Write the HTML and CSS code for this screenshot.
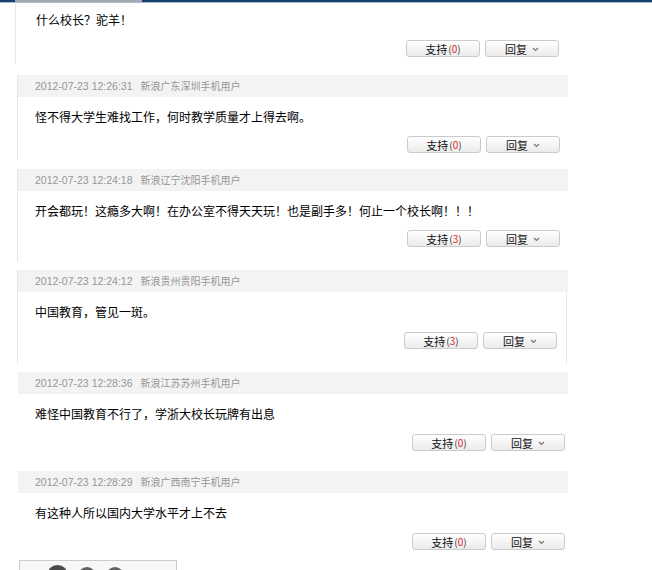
FILE: index.html
```html
<!DOCTYPE html>
<html>
<head>
  <title>评论</title>
  <meta charset="UTF-8">
  <link rel="stylesheet" href="styles.css">
</head>
<body>

<div class="top-bar">
  <div class="top-tab"></div>
</div>

<div class="comment comment-first">
  <div class="comment-body">
    <p class="comment-text">什么校长？驼羊！</p>
    <div class="actions">
      <a href="#" class="btn">支持<span class="count">(<em>0</em>)</span></a>
      <a href="#" class="btn">回复 <svg class="arrow" width="7" height="5" viewBox="0 0 7 5"><path d="M1 1 L3.5 3.5 L6 1" fill="none" stroke="#777" stroke-width="1.2"/></svg></a>
    </div>
  </div>
</div>

<div class="comment">
  <div class="comment-head">2012-07-23 12:26:31<span class="user">新浪广东深圳手机用户</span></div>
  <div class="comment-body">
    <p class="comment-text">怪不得大学生难找工作，何时教学质量才上得去啊。</p>
    <div class="actions">
      <a href="#" class="btn">支持<span class="count">(<em>0</em>)</span></a>
      <a href="#" class="btn">回复 <svg class="arrow" width="7" height="5" viewBox="0 0 7 5"><path d="M1 1 L3.5 3.5 L6 1" fill="none" stroke="#777" stroke-width="1.2"/></svg></a>
    </div>
  </div>
</div>

<div class="comment comment-tall">
  <div class="comment-head">2012-07-23 12:24:18<span class="user">新浪辽宁沈阳手机用户</span></div>
  <div class="comment-body">
    <p class="comment-text">开会都玩！这瘾多大啊！在办公室不得天天玩！也是副手多！何止一个校长啊！！！</p>
    <div class="actions">
      <a href="#" class="btn">支持<span class="count">(<em>3</em>)</span></a>
      <a href="#" class="btn">回复 <svg class="arrow" width="7" height="5" viewBox="0 0 7 5"><path d="M1 1 L3.5 3.5 L6 1" fill="none" stroke="#777" stroke-width="1.2"/></svg></a>
    </div>
  </div>
</div>

<div class="comment comment-tall comment-boxed">
  <div class="comment-head">2012-07-23 12:24:12<span class="user">新浪贵州贵阳手机用户</span></div>
  <div class="comment-body">
    <p class="comment-text">中国教育，管见一斑。</p>
    <div class="actions">
      <a href="#" class="btn">支持<span class="count">(<em>3</em>)</span></a>
      <a href="#" class="btn">回复 <svg class="arrow" width="7" height="5" viewBox="0 0 7 5"><path d="M1 1 L3.5 3.5 L6 1" fill="none" stroke="#777" stroke-width="1.2"/></svg></a>
    </div>
  </div>
</div>

<div class="comment comment-plain">
  <div class="comment-head">2012-07-23 12:28:36<span class="user">新浪江苏苏州手机用户</span></div>
  <div class="comment-body">
    <p class="comment-text">难怪中国教育不行了，学浙大校长玩牌有出息</p>
    <div class="actions">
      <a href="#" class="btn">支持<span class="count">(<em>0</em>)</span></a>
      <a href="#" class="btn">回复 <svg class="arrow" width="7" height="5" viewBox="0 0 7 5"><path d="M1 1 L3.5 3.5 L6 1" fill="none" stroke="#777" stroke-width="1.2"/></svg></a>
    </div>
  </div>
</div>

<div class="comment comment-plain comment-last">
  <div class="comment-head">2012-07-23 12:28:29<span class="user">新浪广西南宁手机用户</span></div>
  <div class="comment-body">
    <p class="comment-text">有这种人所以国内大学水平才上不去</p>
    <div class="actions">
      <a href="#" class="btn">支持<span class="count">(<em>0</em>)</span></a>
      <a href="#" class="btn">回复 <svg class="arrow" width="7" height="5" viewBox="0 0 7 5"><path d="M1 1 L3.5 3.5 L6 1" fill="none" stroke="#777" stroke-width="1.2"/></svg></a>
    </div>
  </div>
</div>

<div class="pager">
  <span class="dot dot-big"></span>
  <span class="dot"></span>
  <span class="dot"></span>
</div>

</body>
</html>
```

FILE: styles.css
```css
body {
  background-color: white;
  font-family: "Liberation Sans", Arial, "Noto Sans CJK SC", sans-serif;
  margin: 0;
  overflow: hidden;
}

/* barra superior */
.top-bar {
  display: flex;
  height: 2px;
  background-color: #173f70;
  border-bottom: 1px solid #a9bdd3;
}

.top-tab {
  margin-left: 15px;
  width: 127px;
  background-color: #a3aab2;
}

/* comentarios */
.comment {
  margin-left: 17px;
  width: 551px;
  box-sizing: border-box;
  border-left: 1px solid #e6e6e6;
  margin-bottom: 9px;
}

.comment-first {
  margin-left: 15px;
  width: 553px;
  margin-bottom: 11px;
}

.comment-first .comment-body {
  padding-top: 9px;
  padding-left: 20px;
  padding-right: 9px;
}

.comment-first .actions {
  margin-top: 12px;
}

.comment-head {
  height: 22px;
  line-height: 22px;
  background-color: #f3f3f3;
  padding-left: 17px;
  font-size: 10.5px;
  color: #969696;
}

.comment-head .user {
  margin-left: 8px;
  font-family: "Noto Sans CJK SC", sans-serif;
  font-size: 10px;
}

.comment-body {
  padding: 12px 8px 7px 17px;
}

.comment-text {
  margin: 0;
  font-family: "Noto Sans CJK SC", sans-serif;
  font-size: 12px;
  line-height: 16px;
  color: #000;
}

.actions {
  display: flex;
  justify-content: flex-end;
  gap: 5px;
  margin-top: 11px;
}

.comment-tall .comment-body {
  padding-bottom: 15px;
}

.comment-tall {
  margin-bottom: 8px;
}

.comment-boxed .comment-body {
  border-right: 1px solid #e6e6e6;
  margin-right: 1px;
  padding-right: 9px;
}

.comment-boxed .actions {
  margin-top: 12px;
}

.comment-plain {
  border-left-color: white;
}

.comment-plain .comment-body {
  padding-right: 3px;
  padding-bottom: 11px;
}

.comment-plain .actions {
  margin-top: 12px;
}

.comment-last {
  margin-bottom: 0;
}

.comment-last .comment-body {
  padding-bottom: 8px;
}

/* botones */
.btn {
  display: flex;
  align-items: center;
  justify-content: center;
  gap: 1px;
  width: 74px;
  height: 17px;
  box-sizing: border-box;
  border: 1px solid #cbcbcb;
  border-radius: 3px;
  background: linear-gradient(#ffffff, #ebebeb);
  font-family: "Noto Sans CJK SC", sans-serif;
  font-size: 11px;
  color: #111;
  text-decoration: none;
}

.count {
  font-size: 10px;
  color: #444;
}

.count em {
  font-style: normal;
  color: #e2252b;
}

.arrow {
  margin-left: 4px;
  margin-top: 1px;
}

/* paginacion */
.pager {
  display: flex;
  align-items: flex-start;
  gap: 10px;
  margin-left: 19px;
  width: 158px;
  height: 30px;
  box-sizing: border-box;
  border: 1px solid #cccccc;
  border-bottom: none;
  background-color: #f7f7f7;
  padding: 4px 0 0 27px;
  margin-top: 2px;
}

.dot {
  width: 18px;
  height: 18px;
  border-radius: 50%;
  background-color: #606060;
  margin-top: 2px;
}

.dot-big {
  width: 21px;
  height: 21px;
  margin-top: 0;
  background-color: #4a4a4a;
}
```
